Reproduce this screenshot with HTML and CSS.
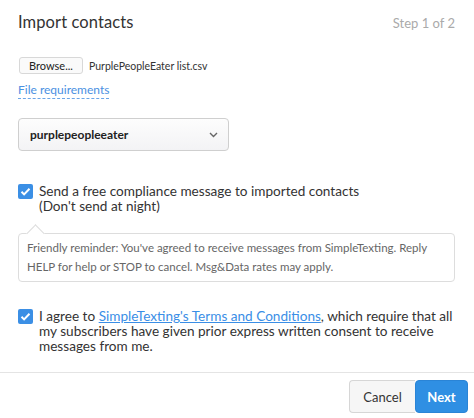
FILE: index.html
```html
<!DOCTYPE html>
<html>
<head>
<meta charset="utf-8">
<link rel="stylesheet" href="styles.css">
</head>
<body>
<div class="modal">
  <div class="body">
    <div class="header">
      <h1 class="title">Import contacts</h1>
      <span class="step">Step 1 of 2</span>
    </div>
    <div class="file-row">
      <button class="browse">Browse...</button>
      <span class="filename">PurplePeopleEater list.csv</span>
    </div>
    <a class="file-req">File requirements</a>
    <div class="select">
      <span class="select-text">purplepeopleeater</span>
      <svg class="chev" width="9" height="6" viewBox="0 0 9 6"><path d="M1 1l3.5 3.5L8 1" fill="none" stroke="#666" stroke-width="1.4"/></svg>
    </div>
    <div class="check-row first">
      <span class="checkbox"><svg width="15" height="15" viewBox="0 0 15 15"><path d="M3.5 7.8l2.6 2.6 5.4-5.6" fill="none" stroke="#fff" stroke-width="2"/></svg></span>
      <span class="check-text">Send a free compliance message to imported contacts<br>(Don't send at night)</span>
    </div>
    <div class="reminder">Friendly reminder: You've agreed to receive messages from SimpleTexting. Reply HELP for help or STOP to cancel. Msg&amp;Data rates may apply.</div>
    <div class="check-row second">
      <span class="checkbox"><svg width="15" height="15" viewBox="0 0 15 15"><path d="M3.5 7.8l2.6 2.6 5.4-5.6" fill="none" stroke="#fff" stroke-width="2"/></svg></span>
      <span class="check-text">I agree to <a class="terms">SimpleTexting's Terms and Conditions</a>, which require that all my subscribers have given prior express written consent to receive messages from me.</span>
    </div>
  </div>
  <div class="footer">
    <button class="btn cancel">Cancel</button>
    <button class="btn next">Next</button>
  </div>
</div>
</body>
</html>
```
FILE: styles.css
```css
html, body { margin: 0; padding: 0; background: #fff; }
body { font-family: Lato, "Open Sans", sans-serif; color: #333; width: 474px; height: 418px; overflow: hidden; }
.modal { display: flex; flex-direction: column; }
.body { padding: 0 19px 0 18px; height: 373px; box-sizing: border-box; border-bottom: 1px solid #e4e4e4; }
.header { display: flex; justify-content: space-between; align-items: baseline; padding-top: 11px; }
.title { margin: 0; font-weight: 400; font-size: 16.5px; line-height: 22px; color: #333; letter-spacing: 0.1px; }
.step { font-size: 13px; color: #aaa; }
.file-row { display: flex; align-items: center; margin-top: 24px; }
.browse { font-family: inherit; font-size: 11px; color: #222; background: #fafafa; border: 1px solid #d8d8d8; border-radius: 3px; height: 17px; width: 64px; padding: 0; margin-left: 1px; }
.filename { font-size: 10.5px; margin-left: 6px; color: #333; }
.file-req { display: inline-block; margin-top: 9px; font-size: 12px; color: #4a90e2; border-bottom: 1px dashed #6aa5e8; line-height: 14px; padding-bottom: 1px; }
.select { display: flex; align-items: center; justify-content: space-between; width: 211px; height: 33px; box-sizing: border-box; margin-top: 19px; border: 1px solid #cfcfcf; border-radius: 4px; background: linear-gradient(#fdfdfd, #f3f3f5); padding: 0 10px 0 11px; }
.select-text { font-weight: 700; font-size: 12px; color: #222; }
.check-row { display: flex; align-items: flex-start; }
.check-row.first { margin-top: 33px; }
.check-row.second { margin-top: 27px; }
.checkbox { flex: none; width: 15px; height: 15px; border-radius: 2px; background: #3b8fe5; margin-top: 0; display: flex; }
.check-text { margin-left: 6px; font-size: 13.6px; line-height: 15px; color: #333; }
.terms { color: #3a8ee6; text-decoration: underline; line-height: 15px; }
.reminder { position: relative; margin-top: 19px; border: 1px solid #ddd; border-radius: 4px; padding: 4px 8px 5px 8px; font-size: 11.5px; line-height: 19px; color: #666; }
.reminder::before { content: ""; position: absolute; left: 10px; top: -7px; width: 12px; height: 12px; background: #fff; border-left: 1px solid #ddd; border-top: 1px solid #ddd; transform: rotate(45deg); }
.footer { display: flex; justify-content: flex-end; padding: 7px 6px 0 0; }
.btn { font-family: inherit; font-size: 13px; height: 33px; border-radius: 4px; padding: 0; }
.cancel { width: 66px; background: #f6f6f6; border: 1px solid #d6d6d6; color: #333; border-right: none; border-radius: 4px 0 0 4px; }
.next { width: 53px; background: #2f8fe3; border: 1px solid #2a84d6; color: #fff; font-weight: 700; }
```
